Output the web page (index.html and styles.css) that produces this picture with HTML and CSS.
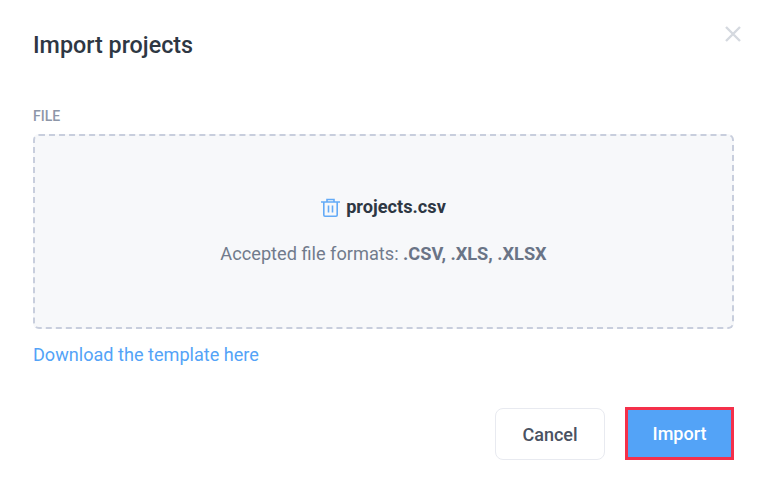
FILE: index.html
```html
<!DOCTYPE html>
<html lang="en">
<head>
    <meta charset="UTF-8">
    <meta name="viewport" content="width=device-width, initial-scale=1.0">
    <title>Import projects</title>
    <link rel="stylesheet" href="styles.css">
</head>
<body>
    <section class="modal">
        <header class="modal-header">
            <h1>Import projects</h1>
            <button class="close" aria-label="Close">
                <svg width="18" height="18" viewBox="0 0 18 18" fill="none" stroke="#d5d9df" stroke-width="2.4">
                    <path d="M2 2l14 14M16 2L2 16"/>
                </svg>
            </button>
        </header>
        <label class="field-label">FILE</label>
        <div class="dropzone">
            <div class="file-row">
                <svg width="19" height="19" viewBox="0 0 19 19" fill="none" stroke="#63aaf7" stroke-width="1.6">
                    <path d="M0 4h19M6 4V1.5h7V4M2.8 4v13a1.2 1.2 0 0 0 1.2 1.2h11a1.2 1.2 0 0 0 1.2-1.2V4M7.5 7.5v7M11.5 7.5v7"/>
                </svg>
                <span class="file-name">projects.csv</span>
            </div>
            <p class="formats">Accepted file formats: <strong>.CSV, .XLS, .XLSX</strong></p>
        </div>
        <a class="template-link" href="#">Download the template here</a>
        <footer class="actions">
            <button class="btn btn-cancel">Cancel</button>
            <button class="btn btn-import">Import</button>
        </footer>
    </section>
</body>
</html>
```

FILE: styles.css
```css
body {
    margin: 0;
    background: #fff;
    font-family: 'Roboto', 'Liberation Sans', sans-serif;
    color: #2e3743;
}
.modal {
    padding: 31px 34px 0 33px;
}
.modal-header {
    display: flex;
    justify-content: space-between;
    align-items: flex-start;
    height: 78px;
}
.modal-header h1 {
    margin: 0;
    font-size: 23.3px;
    line-height: 29px;
    font-weight: 500;
}
.close {
    background: none;
    border: none;
    padding: 0;
    margin: -6px -8px 0 0;
    line-height: 0;
}
.field-label {
    display: block;
    font-size: 14px;
    line-height: 15px;
    font-weight: 500;
    color: #8d96a8;
    margin-bottom: 10px;
}
.dropzone {
    height: 188px;
    border: 2px dashed #c8cedd;
    border-radius: 6px;
    background: #f7f8fa;
    display: flex;
    flex-direction: column;
    align-items: center;
    justify-content: center;
    gap: 24px;
    padding-bottom: 3px;
}
.file-row {
    display: flex;
    align-items: center;
    gap: 6px;
}
.file-name {
    font-size: 18.2px;
    line-height: 24px;
    font-weight: 700;
}
.formats {
    margin: 0;
    font-size: 18.2px;
    line-height: 22px;
    color: #717b8c;
}
.formats strong {
    font-weight: 700;
    color: #6a7486;
}
.template-link {
    display: block;
    margin-top: 14px;
    font-size: 18.1px;
    line-height: 24px;
    color: #53a3f7;
    text-decoration: none;
}
.actions {
    display: flex;
    justify-content: flex-end;
    align-items: flex-start;
    gap: 20px;
    margin-top: 40px;
}
.btn {
    font-family: inherit;
    font-size: 18px;
    font-weight: 500;
    box-sizing: border-box;
}
.btn-cancel {
    width: 110px;
    height: 52px;
    margin-top: 1px;
    background: #fff;
    color: #4a5262;
    border: 1.5px solid #e8eaf0;
    border-radius: 8px;
}
.btn-import {
    width: 109px;
    height: 53px;
    background: #53a3f7;
    color: #fff;
    border: 3px solid #f4304a;
    border-radius: 0;
}
```
